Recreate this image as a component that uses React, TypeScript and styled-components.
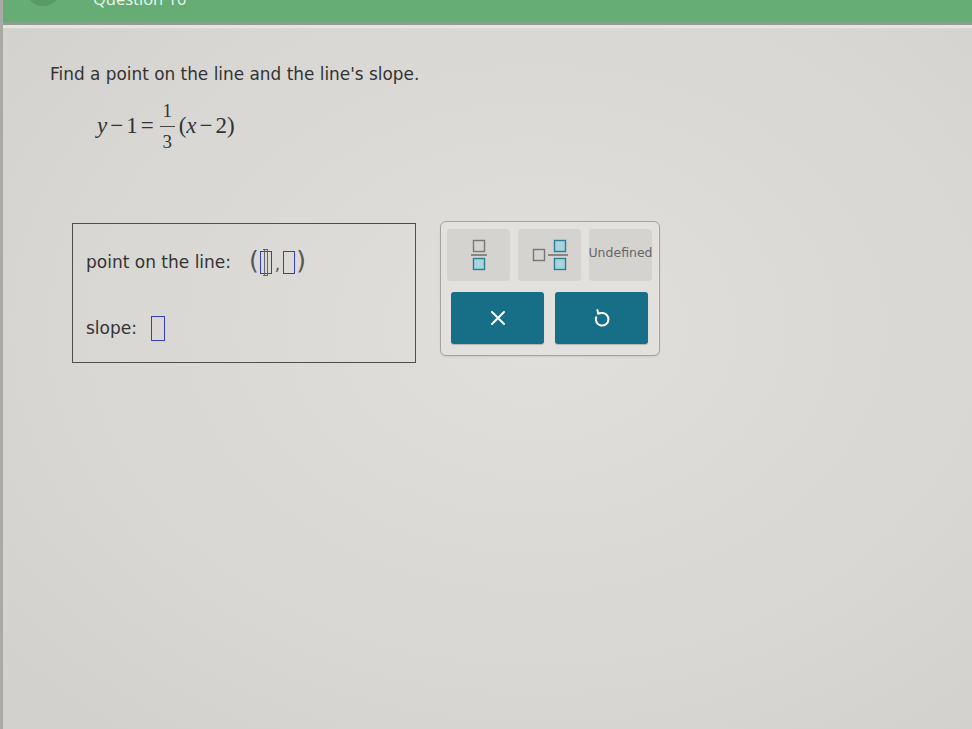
import React from 'react';
import styled, { createGlobalStyle } from 'styled-components';

const GlobalStyle = createGlobalStyle`
  html, body {
    margin: 0;
    padding: 0;
    height: 100%;
  }
  body {
    background: #d9d8d5;
    font-family: 'DejaVu Sans', Verdana, sans-serif;
    color: #333;
  }
`;

const Page = styled.div`
  width: 972px;
  height: 729px;
  overflow: hidden;
  display: flex;
  flex-direction: column;
  background: radial-gradient(ellipse at 55% 45%, #e0dfdc 0%, #d8d7d4 60%, #d1d0cd 100%);
  border-left: 3px solid #a9a9a6;
  box-sizing: border-box;
`;

const Header = styled.div`
  height: 22px;
  flex-shrink: 0;
  background: #65ad74;
  display: flex;
  align-items: flex-end;
  overflow: hidden;
  padding-left: 22px;
  border-bottom: 3px solid #8fa08f;
`;

const HeaderInner = styled.div`
  display: flex;
  align-items: flex-end;
  gap: 32px;
  height: 40px;
  margin-bottom: 17px;
`;

const Avatar = styled.div`
  width: 36px;
  height: 36px;
  border-radius: 50%;
  background: #5a9a67;
  margin-bottom: -1px;
`;

const QuestionTitle = styled.div`
  color: #eef6ee;
  font-size: 16.5px;
  font-family: 'Open Sans', sans-serif;
  line-height: 1;
  margin-bottom: -2px;
`;

const HeaderRule = styled.div`
  height: 3px;
  background: #e6e5e2;
`;

const Content = styled.div`
  padding: 36px 0 0 47px;
  display: flex;
  flex-direction: column;
`;

const Prompt = styled.div`
  font-size: 16.9px;
  color: #333;
`;

const Equation = styled.div`
  margin: 16px 0 0 47px;
  display: flex;
  align-items: center;
  font-family: 'Liberation Serif', 'Times New Roman', serif;
  font-size: 23px;
  color: #333;
  height: 52px;
`;

const Italic = styled.span`
  font-style: italic;
`;

const Op = styled.span`
  margin: 0 3px;
`;

const Fraction = styled.span`
  display: inline-flex;
  flex-direction: column;
  align-items: center;
  font-size: 19px;
  line-height: 18px;
  margin: 0 4px 0 3px;
  gap: 6px;
`;

const FracBar = styled.span`
  width: 15px;
  border-top: 1px solid #444;
`;

const Work = styled.div`
  margin-top: 71px;
  margin-left: 22px;
  display: flex;
  gap: 24px;
  align-items: flex-start;
`;

const AnswerBox = styled.div`
  width: 344px;
  height: 140px;
  border: 1px solid #4e4e4e;
  display: flex;
  flex-direction: column;
  padding: 19px 0 0 13px;
  box-sizing: border-box;
  gap: 28px;
`;

const AnswerRow = styled.div`
  display: flex;
  align-items: center;
  font-size: 17px;
  height: 38px;
  color: #333;
`;

const Label = styled.span<{ $space: number }>`
  margin-right: ${p => p.$space}px;
`;

const Paren = styled.span`
  font-family: 'DejaVu Sans', sans-serif;
  font-size: 25px;
  color: #555;
  line-height: 1;
  margin-top: -3px;
`;

const Slot = styled.span<{ $w?: number; $h?: number }>`
  position: relative;
  display: inline-block;
  width: ${p => p.$w ?? 12}px;
  height: ${p => p.$h ?? 23}px;
  border: 1.5px solid #3b3bc4;
  box-sizing: border-box;
  margin: 0 1px;
`;

const Caret = styled.span`
  position: absolute;
  left: 3px;
  top: -3px;
  bottom: -3px;
  width: 2px;
  border-left: 1px solid #666;
  border-right: 1px solid #666;
  &::before, &::after {
    content: '';
    position: absolute;
    left: -2px;
    width: 4px;
    border-top: 1px solid #666;
  }
  &::before { top: 0; }
  &::after { bottom: 0; }
`;

const Comma = styled.span`
  font-size: 17px;
  color: #555;
  align-self: flex-end;
  margin: 0 2px 7px;
`;

const Keypad = styled.div`
  width: 220px;
  height: 135px;
  margin-top: -2px;
  border: 1px solid #a3a3a0;
  border-radius: 6px;
  background: #e2e1de;
  box-sizing: border-box;
  padding: 7px 7px 0 6px;
  display: flex;
  flex-direction: column;
  gap: 11px;
  box-shadow: 0 1px 2px rgba(0, 0, 0, 0.08);
`;

const KeyRow = styled.div<{ $gap: number; $pad?: number }>`
  display: flex;
  gap: ${p => p.$gap}px;
  padding: 0 ${p => p.$pad ?? 0}px;
`;

const Key = styled.button`
  width: 63px;
  height: 52px;
  border: none;
  border-radius: 4px;
  background: #d4d3d0;
  display: flex;
  align-items: center;
  justify-content: center;
  padding: 0;
  font-family: 'DejaVu Sans', sans-serif;
  font-size: 12.5px;
  color: #666;
  cursor: pointer;
`;

const WordKey = styled(Key)`
  align-items: flex-start;
  padding-top: 16px;
`;

const ActionKey = styled.button`
  width: 93px;
  height: 52px;
  border: none;
  border-radius: 3px;
  background: #176f87;
  display: flex;
  align-items: center;
  justify-content: center;
  padding: 0;
  cursor: pointer;
  box-shadow: 0 1px 1px rgba(0, 0, 0, 0.2);
`;

const FracIcon = () => (
  <svg width="16" height="32" viewBox="0 0 16 32">
    <rect x="2.5" y="1.5" width="11" height="11" fill="none" stroke="#777" strokeWidth="1.4" />
    <line x1="0" y1="16" x2="16" y2="16" stroke="#666" strokeWidth="1.4" />
    <rect x="2.5" y="19.5" width="11" height="11" fill="#a9d4de" stroke="#2b7f96" strokeWidth="1.4" />
  </svg>
);

const MixedIcon = () => (
  <svg width="36" height="32" viewBox="0 0 36 32">
    <rect x="1.5" y="10.5" width="11" height="11" fill="none" stroke="#777" strokeWidth="1.4" />
    <rect x="22.5" y="1.5" width="11" height="11" fill="#a9d4de" stroke="#2b7f96" strokeWidth="1.4" />
    <line x1="16" y1="16" x2="36" y2="16" stroke="#666" strokeWidth="1.4" />
    <rect x="22.5" y="19.5" width="11" height="11" fill="#a9d4de" stroke="#2b7f96" strokeWidth="1.4" />
  </svg>
);

const CloseIcon = () => (
  <svg width="16" height="16" viewBox="0 0 16 16">
    <path d="M2 2 L14 14 M14 2 L2 14" stroke="#fff" strokeWidth="2" strokeLinecap="round" />
  </svg>
);

const UndoIcon = () => (
  <svg width="18" height="20" viewBox="0 0 18 20">
    <path d="M5.2 5.6 L8.6 5 A6.3 6.3 0 1 1 3.2 9.2" fill="none" stroke="#fff" strokeWidth="2" strokeLinecap="round" strokeLinejoin="round" />
    <path d="M5.2 5.6 L4.4 2" fill="none" stroke="#fff" strokeWidth="2" strokeLinecap="round" />
  </svg>
);

const App = () => {
  return (
    <>
      <GlobalStyle />
      <Page>
        <Header>
          <HeaderInner>
            <Avatar />
            <QuestionTitle>Question 10</QuestionTitle>
          </HeaderInner>
        </Header>
        <HeaderRule />
        <Content>
          <Prompt>Find a point on the line and the line's slope.</Prompt>
          <Equation>
            <Italic>y</Italic>
            <Op>−</Op>
            <span>1</span>
            <Op>=</Op>
            <Fraction>
              <span>1</span>
              <FracBar />
              <span>3</span>
            </Fraction>
            <span>(</span>
            <Italic>x</Italic>
            <Op>−</Op>
            <span>2)</span>
          </Equation>
          <Work>
            <AnswerBox>
              <AnswerRow>
                <Label $space={18}>point on the line:</Label>
                <Paren>(</Paren>
                <Slot>
                  <Caret />
                </Slot>
                <Comma>,</Comma>
                <Slot />
                <Paren>)</Paren>
              </AnswerRow>
              <AnswerRow>
                <Label $space={13}>slope:</Label>
                <Slot $w={14} $h={25} />
              </AnswerRow>
            </AnswerBox>
            <Keypad>
              <KeyRow $gap={8}>
                <Key aria-label="fraction">
                  <FracIcon />
                </Key>
                <Key aria-label="mixed number">
                  <MixedIcon />
                </Key>
                <WordKey>Undefined</WordKey>
              </KeyRow>
              <KeyRow $gap={11} $pad={4}>
                <ActionKey aria-label="clear">
                  <CloseIcon />
                </ActionKey>
                <ActionKey aria-label="undo">
                  <UndoIcon />
                </ActionKey>
              </KeyRow>
            </Keypad>
          </Work>
        </Content>
      </Page>
    </>
  );
};

export default App;
